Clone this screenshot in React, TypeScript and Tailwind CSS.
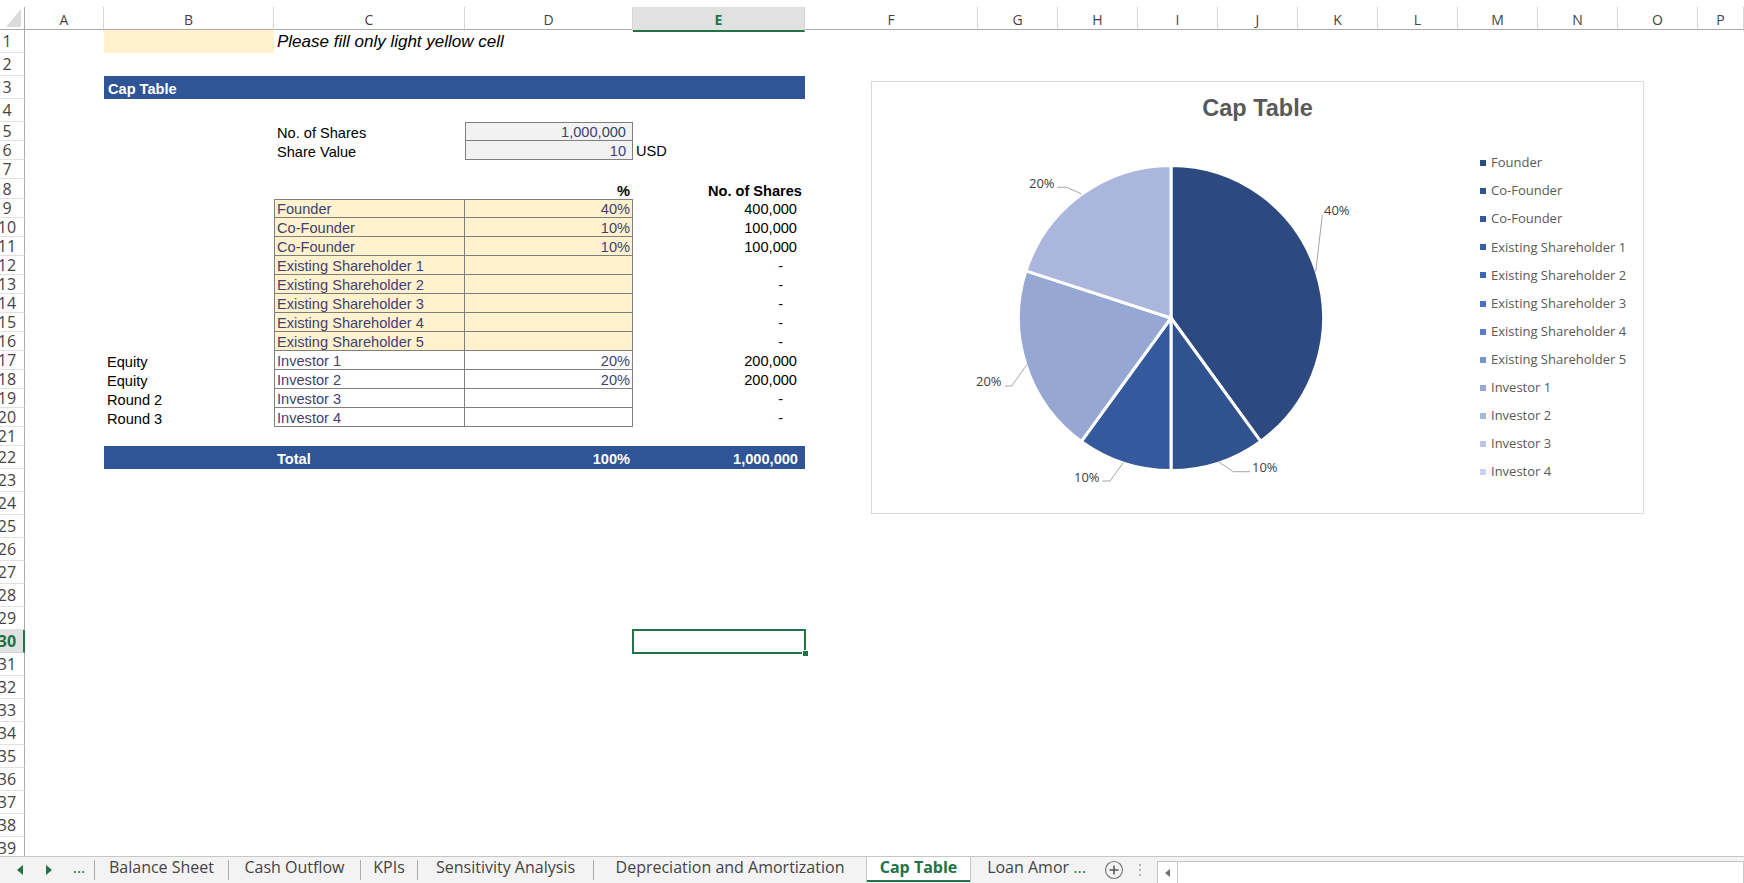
import React from "react";

const COLS = "grid grid-cols-[25px_79px_170px_191px_168px_172px_173px_1fr]";
const HCOLS =
  "grid grid-cols-[25px_79px_170px_191px_168px_172px_173px_80px_80px_80px_80px_80px_80px_80px_80px_80px_46px]";
const LETTERS = ["A", "B", "C", "D", "E", "F", "G", "H", "I", "J", "K", "L", "M", "N", "O", "P"];

function RowHead({ n, active }: { n: number; active?: boolean }) {
  return (
    <div
      className={
        active
          ? "relative overflow-hidden bg-[#e1e1e1] border-b border-b-[#d4d4d4] border-r-2 border-r-[#217346] text-[#217346] font-bold"
          : "relative overflow-hidden border-b border-b-[#e1e1e1] border-r border-r-[#ababab] text-[#444444]"
      }
    >
      <div className="absolute inset-y-0 left-[-10px] w-[34px] flex items-center justify-center text-[16px] leading-none [font-family:'Open_Sans',sans-serif]">
        {n}
      </div>
    </div>
  );
}

function Row({
  n,
  h,
  active,
  children,
}: {
  n: number;
  h: string;
  active?: boolean;
  children?: React.ReactNode;
}) {
  return (
    <div className={`${COLS} ${h} shrink-0`}>
      <RowHead n={n} active={active} />
      {children}
    </div>
  );
}

const E = () => <div />;

const entries = [
  { b: "", c: "Founder", d: "40%", e: "400,000", y: true },
  { b: "", c: "Co-Founder", d: "10%", e: "100,000", y: true },
  { b: "", c: "Co-Founder", d: "10%", e: "100,000", y: true },
  { b: "", c: "Existing Shareholder 1", d: "", e: "-", y: true },
  { b: "", c: "Existing Shareholder 2", d: "", e: "-", y: true },
  { b: "", c: "Existing Shareholder 3", d: "", e: "-", y: true },
  { b: "", c: "Existing Shareholder 4", d: "", e: "-", y: true },
  { b: "", c: "Existing Shareholder 5", d: "", e: "-", y: true },
  { b: "Equity", c: "Investor 1", d: "20%", e: "200,000", y: false },
  { b: "Equity", c: "Investor 2", d: "20%", e: "200,000", y: false },
  { b: "Round 2", c: "Investor 3", d: "", e: "-", y: false },
  { b: "Round 3", c: "Investor 4", d: "", e: "-", y: false },
];

const legend = [
  { t: "Founder", c: "bg-[#2c4a80]" },
  { t: "Co-Founder", c: "bg-[#30528f]" },
  { t: "Co-Founder", c: "bg-[#34599d]" },
  { t: "Existing Shareholder 1", c: "bg-[#3560a8]" },
  { t: "Existing Shareholder 2", c: "bg-[#3b66b2]" },
  { t: "Existing Shareholder 3", c: "bg-[#4a70bb]" },
  { t: "Existing Shareholder 4", c: "bg-[#5b7dc2]" },
  { t: "Existing Shareholder 5", c: "bg-[#7c93cd]" },
  { t: "Investor 1", c: "bg-[#96a7d3]" },
  { t: "Investor 2", c: "bg-[#aab6dc]" },
  { t: "Investor 3", c: "bg-[#bcc4e3]" },
  { t: "Investor 4", c: "bg-[#ccd2ea]" },
];

function HeaderRow() {
  return (
    <div
      className={`${HCOLS} h-[23px] shrink-0 border-b border-[#ababab] [font-family:'Open_Sans',sans-serif] text-[14px] text-[#444444]`}
    >
      <div className="relative border-r border-[#ababab]">
        <svg className="absolute left-0 top-0" width="24" height="22" viewBox="0 0 24 22">
          <polygon points="6,20 21,20 21,2" fill="#dcdcdc" />
        </svg>
      </div>
      {LETTERS.map((l) =>
        l === "E" ? (
          <div
            key={l}
            className="flex items-center justify-center pt-[2px] bg-[#e1e1e1] border-r border-[#d4d4d4] border-b-2 border-b-[#217346] mb-[-1px] text-[#217346] font-bold"
          >
            {l}
          </div>
        ) : (
          <div key={l} className="flex items-center justify-center pt-[1px] border-r border-[#d4d4d4]">
            {l}
          </div>
        )
      )}
    </div>
  );
}

function Sheet() {
  const emptyTail = [];
  for (let n = 23; n <= 39; n++) {
    if (n === 30) {
      emptyTail.push(
        <Row key={n} n={n} h="h-[23px]" active>
          <E />
          <E />
          <E />
          <E />
          <div className="relative">
            <div className="absolute inset-[-1px] border-2 border-[#217346]" />
            <div className="absolute right-[-4px] bottom-[-4px] w-[7px] h-[7px] bg-[#217346] border border-white" />
          </div>
        </Row>
      );
    } else {
      emptyTail.push(<Row key={n} n={n} h="h-[23px]" />);
    }
  }

  return (
    <div className="flex-1 overflow-hidden flex flex-col text-[14.6px] leading-[16px]">
      <Row n={1} h="h-[23px]">
        <E />
        <div className="bg-[#fff2cc]" />
        <div className="flex items-end pl-[3px] pb-[1px] whitespace-nowrap italic text-[17px] leading-[20px]">
          Please fill only light yellow cell
        </div>
      </Row>
      <Row n={2} h="h-[23px]" />
      <Row n={3} h="h-[23px]">
        <E />
        <div className="col-span-4 bg-[#2f5597] flex items-end pb-[1px] pl-[4px] text-white font-bold leading-[17px]">
          Cap Table
        </div>
      </Row>
      <Row n={4} h="h-[23px]" />
      <Row n={5} h="h-[19px]">
        <E />
        <E />
        <div className="flex items-end pl-[3px] whitespace-nowrap">No. of Shares</div>
        <div className="flex items-end justify-end pr-[6px] border border-[#7f7f7f] bg-[#f2f2f2] text-[#3f3f76]">
          1,000,000
        </div>
      </Row>
      <Row n={6} h="h-[19px]">
        <E />
        <E />
        <div className="flex items-end pl-[3px] whitespace-nowrap">Share Value</div>
        <div className="flex items-end justify-end pr-[6px] border-x border-b border-[#7f7f7f] bg-[#f2f2f2] text-[#3f3f76]">
          10
        </div>
        <div className="flex items-end pl-[3px] pb-[1px]">USD</div>
      </Row>
      <Row n={7} h="h-[19px]" />
      <Row n={8} h="h-[20px]">
        <E />
        <E />
        <E />
        <div className="flex items-end justify-end pr-[3px] font-bold">%</div>
        <div className="flex items-end justify-end pr-[3px] font-bold whitespace-nowrap">No. of Shares</div>
      </Row>
      {entries.map((r, i) => (
        <Row key={i} n={9 + i} h="h-[19px]">
          <E />
          <div className="flex items-end pl-[3px] whitespace-nowrap">{r.b}</div>
          <div
            className={`${i === 0 ? "border-t" : ""} ${
              r.y ? "bg-[#fff2cc]" : "bg-white"
            } border-l border-r border-b border-[#7f7f7f] text-[#3f3f76] flex items-end pl-[2px] whitespace-nowrap overflow-hidden`}
          >
            {r.c}
          </div>
          <div
            className={`${i === 0 ? "border-t" : ""} ${
              r.y ? "bg-[#fff2cc]" : "bg-white"
            } border-r border-b border-[#7f7f7f] text-[#3f3f76] flex items-end justify-end pr-[2px]`}
          >
            {r.d}
          </div>
          <div className={`flex items-end justify-end pb-[1px] ${r.e === "-" ? "pr-[22px]" : "pr-[8px]"}`}>{r.e}</div>
        </Row>
      ))}
      <Row n={21} h="h-[19px]" />
      <Row n={22} h="h-[23px]">
        <E />
        <div className="bg-[#2f5597]" />
        <div className="bg-[#2f5597] text-white font-bold flex items-end pb-[1px] pl-[3px] leading-[17px]">Total</div>
        <div className="bg-[#2f5597] text-white font-bold flex items-end justify-end pb-[1px] pr-[3px] leading-[17px]">
          100%
        </div>
        <div className="bg-[#2f5597] text-white font-bold flex items-end justify-end pb-[1px] pr-[7px] leading-[17px]">
          1,000,000
        </div>
      </Row>
      {emptyTail}
    </div>
  );
}

function Sep() {
  return <div className="w-px h-[20px] mt-[3px] bg-[#ababab] shrink-0" />;
}

function TabBar() {
  return (
    <div className="h-[27px] shrink-0 border-t border-[#c6c6c6] bg-[#f3f3f3] flex items-start [font-family:'Open_Sans',sans-serif] text-[16px] leading-[21px] text-[#444444]">
      <div className="w-[40px] h-full flex items-center justify-center shrink-0">
        <svg width="6" height="10" viewBox="0 0 6 10">
          <path d="M6 0 L0 5 L6 10 Z" fill="#217346" />
        </svg>
      </div>
      <div className="w-[18px] h-full flex items-center justify-center shrink-0">
        <svg width="6" height="10" viewBox="0 0 6 10">
          <path d="M0 0 L6 5 L0 10 Z" fill="#217346" />
        </svg>
      </div>
      <div className="w-[36px] pl-[6px] flex justify-center shrink-0 text-[#217346]">...</div>
      <Sep />
      <div className="w-[133px] text-center shrink-0">Balance Sheet</div>
      <Sep />
      <div className="w-[131px] text-center shrink-0">Cash Outflow</div>
      <Sep />
      <div className="w-[56px] text-center shrink-0">KPIs</div>
      <Sep />
      <div className="w-[175px] text-center shrink-0">Sensitivity Analysis</div>
      <Sep />
      <div className="w-[272px] text-center shrink-0 whitespace-nowrap">Depreciation and Amortization</div>
      <div className="w-[105px] h-[26px] shrink-0 bg-white border-x border-[#c6c6c6] flex flex-col items-center">
        <span className="font-bold text-[#217346]">Cap Table</span>
        <div className="mt-auto mb-[1px] h-[2px] w-full bg-[#217346]" />
      </div>
      <div className="w-[131px] text-center shrink-0 whitespace-nowrap">
        Loan Amor <span className="text-[#217346]">...</span>
      </div>
      <div className="w-[24px] h-full flex items-center justify-center shrink-0">
        <svg width="20" height="20" viewBox="0 0 20 20">
          <circle cx="10" cy="10" r="8.5" fill="none" stroke="#7a7a7a" strokeWidth="1.2" />
          <path d="M10 5.5 V14.5 M5.5 10 H14.5" stroke="#555555" strokeWidth="1.5" />
        </svg>
      </div>
      <div className="w-[28px] h-full flex items-center justify-center shrink-0">
        <svg width="4" height="12" viewBox="0 0 4 12">
          <rect x="1" y="0" width="2" height="2" fill="#b4b4b4" />
          <rect x="1" y="5" width="2" height="2" fill="#b4b4b4" />
          <rect x="1" y="10" width="2" height="2" fill="#b4b4b4" />
        </svg>
      </div>
      <div className="ml-[3px] self-end h-[22px] flex-1 border border-b-0 border-[#c6c6c6] bg-white flex">
        <div className="w-[20px] h-full border-r border-[#c6c6c6] flex items-center justify-center">
          <svg width="5" height="8" viewBox="0 0 5 8">
            <path d="M5 0 L0 4 L5 8 Z" fill="#707070" />
          </svg>
        </div>
      </div>
    </div>
  );
}

function Chart() {
  return (
    <div className="absolute left-[871px] top-[81px] w-[773px] h-[433px] border border-[#d9d9d9] bg-white">
      <svg className="absolute left-[-1px] top-[-1px]" width="773" height="433" viewBox="0 0 773 433">
        <g stroke="#ffffff" strokeWidth="3" strokeLinejoin="round">
          <path d="M300 237 L300 84.5 A152.5 152.5 0 0 1 389.64 360.37 Z" fill="#2c4a80" />
          <path d="M300 237 L389.64 360.37 A152.5 152.5 0 0 1 300 389.5 Z" fill="#30528f" />
          <path d="M300 237 L300 389.5 A152.5 152.5 0 0 1 210.36 360.37 Z" fill="#34599d" />
          <path d="M300 237 L210.36 360.37 A152.5 152.5 0 0 1 154.96 189.88 Z" fill="#96a7d3" />
          <path d="M300 237 L154.96 189.88 A152.5 152.5 0 0 1 300 84.5 Z" fill="#aab6dc" />
        </g>
        <g fill="none" stroke="#a6a6a6" strokeWidth="1">
          <polyline points="451.3,134 444.7,190.7" />
          <polyline points="186.3,106.3 195.7,106.3 210.7,113" />
          <polyline points="134,305 140.7,305 155.7,284" />
          <polyline points="231.3,400 239,400 252.3,381.7" />
          <polyline points="347.3,380.7 362.3,390.7 379,390.7" />
        </g>
        <g fontFamily="'Open Sans', sans-serif" fontSize="13" fill="#404040">
          <text x="453" y="134.3">40%</text>
          <text x="158" y="106.6">20%</text>
          <text x="105" y="304.6">20%</text>
          <text x="203" y="400.6">10%</text>
          <text x="381" y="390.6">10%</text>
        </g>
      </svg>
      <div className="absolute left-0 right-0 top-[13px] text-center text-[23.5px] leading-[27px] font-bold text-[#595959]">
        Cap Table
      </div>
      <div className="absolute left-[608px] top-[67px] flex flex-col [font-family:'Open_Sans',sans-serif] text-[13px] text-[#595959]">
        {legend.map((l, i) => (
          <div key={i} className="h-[28.1px] flex items-center gap-[5px] whitespace-nowrap">
            <span className={`w-[6px] h-[6px] ${l.c}`} />
            {l.t}
          </div>
        ))}
      </div>
    </div>
  );
}

export default function App() {
  return (
    <div className="relative w-[1744px] h-[883px] overflow-hidden bg-white flex flex-col [font-family:'Liberation_Sans',Arial,sans-serif] text-black">
      <div className="h-[7px] shrink-0" />
      <HeaderRow />
      <Sheet />
      <TabBar />
      <Chart />
    </div>
  );
}
